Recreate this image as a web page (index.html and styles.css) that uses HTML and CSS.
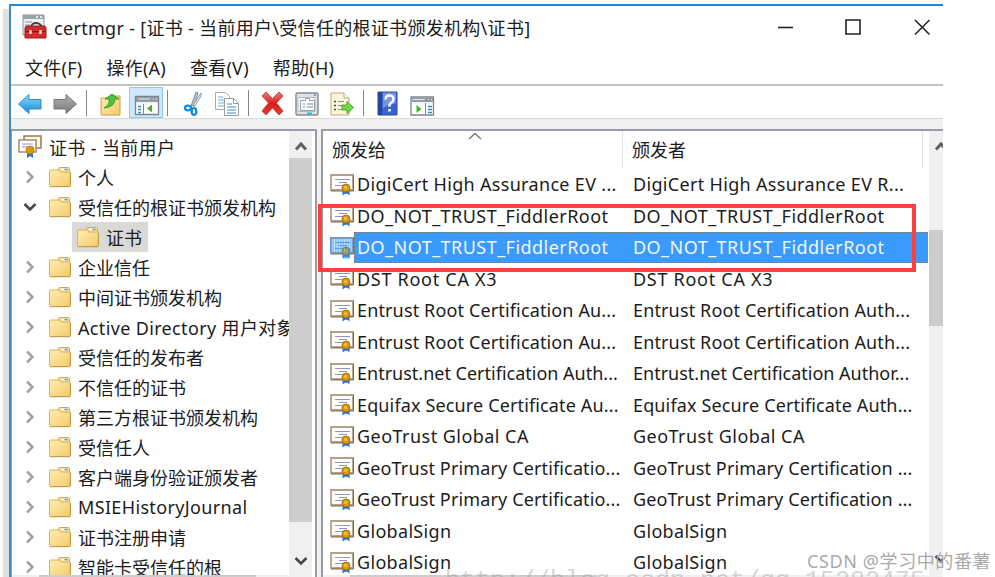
FILE: index.html
```
<!DOCTYPE html>
<html lang="zh-CN">
  <head>
    <meta charset="UTF-8" />
    <meta name="viewport" content="width=device-width, initial-scale=1" />
    <title>certmgr</title>
    <link rel="stylesheet" href="styles.css">
  </head>
  <body>
    <!-- Shared icons -->
    <svg class="defs" width="0" height="0">
      <defs>
        <linearGradient id="gold" x1="0" y1="0" x2="1" y2="1">
          <stop offset="0" stop-color="#ffeeb0" />
          <stop offset="1" stop-color="#f3cb6a" />
        </linearGradient>
        <linearGradient id="blue" x1="0" y1="0" x2="0" y2="1">
          <stop offset="0" stop-color="#8ddcfb" />
          <stop offset="1" stop-color="#1187dc" />
        </linearGradient>
        <linearGradient id="grey" x1="0" y1="0" x2="0" y2="1">
          <stop offset="0" stop-color="#b4b4b4" />
          <stop offset="1" stop-color="#777" />
        </linearGradient>
        <linearGradient id="red" x1="0" y1="0" x2="0" y2="1">
          <stop offset="0" stop-color="#f08078" />
          <stop offset=".5" stop-color="#dc1a15" />
          <stop offset="1" stop-color="#e83a30" />
        </linearGradient>
        <pattern id="dither" width="4" height="4" patternUnits="userSpaceOnUse">
          <path d="M0 0h2v2h2v2h-2v-2h-2z" fill="#3397fa" />
        </pattern>
        <symbol id="folder" viewBox="0 0 22 21">
          <path d="M9.500 3.500v-2q0-1 1-1h9q1 0 1 1v5h-11z" fill="#f6dc91" stroke="#d0aa5c" />
          <path d="M12 2.500h6" stroke="#fffbe8" stroke-width="2" />
          <path d="M15.500 2.500h3" stroke="#4a9ad8" stroke-width="1.500" />
          <path d="M.5 4q0-1 1-1h9l1.500 2h8.500q1 0 1 1v12.500q0 1-1 1h-19q-1 0-1-1z" fill="url(#gold)" stroke="#d8b265" />
          <path d="M1 19.700h20M21.300 6v13" stroke="#bf9748" fill="none" />
        </symbol>
        <symbol id="cert" viewBox="0 0 24 22">
          <path d="M1 1h22v15h-22z" fill="#fff" stroke="#b3a087" stroke-width="1.800" />
          <path d="M1 17h22.500v-16" fill="none" stroke="#80694d" stroke-width="1" />
          <path d="M5 5.500h15M9 8.500h8M5 11.500h8" stroke="#9295c4" stroke-width="1.200" />
          <path d="M12.500 15h7v6.500l-2-1.800h-2.500l-2.500 1.800z" fill="#2870de" />
          <circle cx="16" cy="14" r="4" fill="#d79a12" stroke="#a97505" />
          <circle cx="15.500" cy="13.500" r="1.500" fill="#f3c54c" />
        </symbol>
        <symbol id="cert-selected" viewBox="0 0 24 22">
          <use href="#cert" width="24" height="22" />
          <path d="M0 0h24v17h-4l-1 5h-6v-5h-13z" fill="#3397fa" opacity=".3" />
          <path d="M0 1h24M0 3h24M0 5h24M0 7h24M0 9h24M0 11h24M0 13h24M0 15h24" stroke="#3397fa" stroke-width="1.200" stroke-dasharray="1.500 1" opacity=".8" />
          <path d="M13 18h7M13 20h7" stroke="#3397fa" stroke-width="1" />
        </symbol>
        <symbol id="right" viewBox="0 0 10 14">
          <path d="M2 1.500l5.500 5.500l-5.500 5.500" fill="none" stroke="#a3a3a3" stroke-width="2.500" />
        </symbol>
        <symbol id="down" viewBox="0 0 14 10">
          <path d="M1.500 2l5.500 5.500l5.500-5.500" fill="none" stroke="#454545" stroke-width="2.500" />
        </symbol>
        <symbol id="up" viewBox="0 0 14 10">
          <path d="M2 8.500l5-5.500l5 5.500" fill="none" stroke="#606060" stroke-width="3" />
        </symbol>
        <symbol id="arrow" viewBox="0 0 26 22">
          <path d="M1.500 11l10.500-9.500v5h12v9.500h-12v4.500z" stroke-linejoin="round" />
        </symbol>
      </defs>
    </svg>

    <div class="window">
      <!-- Title bar -->
      <header class="titlebar">
        <svg class="app-icon" width="26" height="26" viewBox="0 0 26 26">
          <path d="M1 1h21v20h-21z" fill="#eef0f2" stroke="#8c949c" />
          <path d="M1 1h21v4h-21z" fill="#9aa3ab" />
          <path d="M14 3h2M18 3h2" stroke="#fff" stroke-width="1.500" />
          <path d="M3 8h7M3 11h5" stroke="#a8b0b8" stroke-width="1.500" />
          <path d="M9 13q1-4 5-4t6 4" fill="none" stroke="#4c4444" stroke-width="2" />
          <path d="M3 14q0-2 2-2h17q2 0 2 2v10h-21z" fill="#cf2c2a" stroke="#a41f1d" />
          <path d="M3 17.500h21" stroke="#8e1716" />
          <path d="M8.500 16v4M18.500 16v4" stroke="#ddd" stroke-width="2.500" />
        </svg>
        <h1 class="title">certmgr - [证书 - 当前用户\受信任的根证书颁发机构\证书]</h1>
        <svg class="controls" width="154" height="18" viewBox="0 0 154 18" fill="none" stroke="#222" stroke-width="1.600">
          <path d="M1 9.500h15" />
          <path d="M69 2h14v14h-14z" />
          <path d="M138 2l14.500 14.500M152.500 2l-14.500 14.500" stroke-width="1.500" />
        </svg>
      </header>

      <nav class="menu">
        <span>文件(F)</span>
        <span>操作(A)</span>
        <span>查看(V)</span>
        <span>帮助(H)</span>
      </nav>

      <!-- Toolbar -->
      <div class="toolbar">
        <svg width="399" height="32" viewBox="0 0 399 32">
          <!-- back / forward -->
          <use href="#arrow" x="6" y="7" width="26" height="22" fill="url(#blue)" stroke="#3a8cc4" />
          <use href="#arrow" width="26" height="22" transform="translate(67 7) scale(-1 1)" fill="url(#grey)" stroke="#777" />
          <path d="M75.500 4v26M156.500 4v26M237.500 4v26M352.500 4v26" stroke="#858585" />
          <!-- up one level -->
          <path d="M90 12h8l2-2h9v19h-19z" fill="url(#gold)" stroke="#c99f50" />
          <path d="M93 22q6-3 5-9h-4l7-5l7 5h-4q0 8-11 9z" fill="#4cc23b" stroke="#2b8f25" stroke-width=".8" />
          <!-- console tree toggle -->
          <path d="M118.500 1.500h33v30h-33z" fill="#cfe8fd" stroke="#8fc8f6" />
          <path d="M124.500 10.500h23v18h-23z" fill="#fff" stroke="#78838c" stroke-width="1.300" />
          <path d="M125 11h22v5h-22z" fill="#929da7" />
          <path d="M127 13h12M142 13h1M145 13h1M125 17h22" stroke="#e4e9ed" />
          <path d="M132.500 18v10" stroke="#7d8991" />
          <path d="M127 20.500h3M127 23.500h3M127 26.500h3" stroke="#3b85c5" stroke-width="1.500" />
          <path d="M141 18.500v8l-5-4z" fill="#43b52d" />
          <!-- cut -->
          <path d="M180 20l5-14l2 1l-4 13z" fill="#b9c7d5" stroke="#697887" stroke-width=".8" />
          <path d="M184 20l6-10v-3l-8 12z" fill="#e5edf4" stroke="#718394" stroke-width=".8" />
          <ellipse cx="177" cy="22" rx="3" ry="2.300" fill="none" stroke="#168edc" stroke-width="2.300" />
          <ellipse cx="183" cy="25.500" rx="2.300" ry="3.300" fill="none" stroke="#168edc" stroke-width="2.300" />
          <!-- copy -->
          <path d="M204.500 6.500h10l4 4v13h-14z" fill="#fff" stroke="#a4a9af" />
          <path d="M207 11h5M207 14h8M207 17h8M207 20h6" stroke="#76a7dc" />
          <path d="M213.500 12.500h9l5 5v12h-14z" fill="#fff" stroke="#969ca3" />
          <path d="M222.500 12.500v5h5" fill="none" stroke="#969ca3" />
          <path d="M216 18h5M216 21h9M216 24h9M216 27h9" stroke="#3f89d5" />
          <!-- delete -->
          <path d="M251 10l4-4l6.500 6.500l6.500-6.500l4 4l-6.500 7l6.500 8l-4 4l-6.500-7l-6.500 7l-4-4l6.500-8z" fill="url(#red)" stroke="#b8524d" stroke-linejoin="round" />
          <!-- properties -->
          <rect x="285" y="7" width="22" height="22" rx="1.500" fill="#dfe3e7" stroke="#85898e" stroke-width="1.400" />
          <path d="M287 11.500h17v14h-17z" fill="#f9fafb" stroke="#b5b9bd" />
          <path d="M289.500 14.500h5v-2h4v2h5v10h-14z" fill="#fff" stroke="#92a0ad" />
          <path d="M292 18h2M296 18h6M292 21h2M296 21h6" stroke="#6f8ba4" />
          <path d="M296 27.500h5" stroke="#25b8e9" stroke-width="2" />
          <path d="M303 9h2" stroke="#4b5560" />
          <!-- export list -->
          <path d="M320 7h13l5 5v17h-18z" fill="#fcf6d7" stroke="#b9aa82" />
          <path d="M333 7v5h5" fill="#fff" stroke="#b9aa82" />
          <path d="M323 15.500h2M323 19.500h2M323 23.500h2" stroke="#444" stroke-width="1.500" />
          <path d="M327 15.500h6M327 19.500h4M327 23.500h5" stroke="#8888a8" stroke-width="1.200" />
          <path d="M331 19h5v-3.500l6.500 6l-6.500 6v-3.500h-5z" fill="#76d64b" stroke="#4aa831" />
          <!-- help -->
          <path d="M367 6h19v23h-19z" fill="#3b62cc" stroke="#2a469b" />
          <path d="M367 6h4v23h-4z" fill="#27459f" />
          <path d="M372 6.500h13v11q-7 0-13 5z" fill="#7694e3" />
          <path d="M374.500 13.500q0-4 4-4t4 3.500q0 2.200-2.200 3.700t-1.800 4" fill="none" stroke="#fff" stroke-width="2.300" />
          <path d="M377.200 23h2.600v2.500h-2.600z" fill="#fff" />
        </svg>
        <!-- action pane toggle -->
        <svg width="25" height="32" viewBox="0 0 25 32">
          <path d="M1 11h22.500v18h-22.500z" fill="#fff" stroke="#7d858c" stroke-width="1.300" />
          <path d="M1.500 11.500h21.500v4.500h-21.500z" fill="#929ba4" />
          <path d="M3 13.500h12M18 13.500h1M21 13.500h1M2 17h21" stroke="#e4e9ed" />
          <path d="M15.500 17v11" stroke="#7d8991" />
          <path d="M18 20.500h4M18 23.500h4M18 26.500h4" stroke="#3b85c5" stroke-width="1.500" />
          <path d="M6.500 19v8l5-4z" fill="#43b52d" />
        </svg>
      </div>

      <main class="panes">
        <!-- Console tree -->
        <section class="tree-pane">
          <div class="tree-column">
            <ul class="tree">
              <li class="root">
                <svg width="24" height="24" viewBox="0 0 24 24">
                  <path d="M6 1h17v12h-17z" fill="#fff7dc" stroke="#92795a" stroke-width="1.500" />
                  <path d="M1 5h17v12h-17z" fill="#fff" stroke="#a58c68" stroke-width="1.500" />
                  <path d="M4 9h11M4 12h5" stroke="#8b97d2" />
                  <path d="M9 16h6v7l-3-2l-3 2z" fill="#2870de" />
                  <circle cx="12" cy="15" r="4" fill="#d79a12" stroke="#b98209" />
                </svg>
                <span>证书 - 当前用户</span>
              </li>
              <li><svg class="chevron"><use href="#right" /></svg><svg class="folder"><use href="#folder" /></svg><span>个人</span></li>
              <li><svg class="chevron open"><use href="#down" /></svg><svg class="folder"><use href="#folder" /></svg><span>受信任的根证书颁发机构</span></li>
              <li class="child"><div class="current"><svg class="folder"><use href="#folder" /></svg><span>证书</span></div></li>
              <li><svg class="chevron"><use href="#right" /></svg><svg class="folder"><use href="#folder" /></svg><span>企业信任</span></li>
              <li><svg class="chevron"><use href="#right" /></svg><svg class="folder"><use href="#folder" /></svg><span>中间证书颁发机构</span></li>
              <li><svg class="chevron"><use href="#right" /></svg><svg class="folder"><use href="#folder" /></svg><span class="latin">Active Directory 用户对象</span></li>
              <li><svg class="chevron"><use href="#right" /></svg><svg class="folder"><use href="#folder" /></svg><span>受信任的发布者</span></li>
              <li><svg class="chevron"><use href="#right" /></svg><svg class="folder"><use href="#folder" /></svg><span>不信任的证书</span></li>
              <li><svg class="chevron"><use href="#right" /></svg><svg class="folder"><use href="#folder" /></svg><span>第三方根证书颁发机构</span></li>
              <li><svg class="chevron"><use href="#right" /></svg><svg class="folder"><use href="#folder" /></svg><span>受信任人</span></li>
              <li><svg class="chevron"><use href="#right" /></svg><svg class="folder"><use href="#folder" /></svg><span>客户端身份验证颁发者</span></li>
              <li><svg class="chevron"><use href="#right" /></svg><svg class="folder"><use href="#folder" /></svg><span class="latin">MSIEHistoryJournal</span></li>
              <li><svg class="chevron"><use href="#right" /></svg><svg class="folder"><use href="#folder" /></svg><span>证书注册申请</span></li>
              <li><svg class="chevron"><use href="#right" /></svg><svg class="folder"><use href="#folder" /></svg><span>智能卡受信任的根</span></li>
            </ul>
            <div class="hscroll"><div class="hthumb tree-hthumb"></div></div>
          </div>
          <div class="scrollbar tree-scroll">
            <svg width="14" height="10"><use href="#up" /></svg>
            <div class="thumb"></div>
            <svg width="14" height="10"><use href="#down" /></svg>
          </div>
        </section>

        <!-- Certificate list -->
        <section class="list-pane">
          <div class="list-column">
            <div class="list">
              <div class="list-head">
                <div>颁发给<svg class="sort" width="14" height="8" viewBox="0 0 14 8"><path d="M1 7l6-5.500l6 5.500" fill="none" stroke="#777" stroke-width="1.500" /></svg></div>
                <div>颁发者</div>
              </div>
              <div class="row loose"><svg class="cert"><use href="#cert" /></svg><span>DigiCert High Assurance EV ...</span><span>DigiCert High Assurance EV R...</span></div>
              <div class="row looser"><svg class="cert"><use href="#cert" /></svg><span>DO_NOT_TRUST_FiddlerRoot</span><span>DO_NOT_TRUST_FiddlerRoot</span></div>
              <div class="row looser selected"><svg class="cert"><use href="#cert-selected" /></svg><span>DO_NOT_TRUST_FiddlerRoot</span><span>DO_NOT_TRUST_FiddlerRoot</span></div>
              <div class="row loosest"><svg class="cert"><use href="#cert" /></svg><span>DST Root CA X3</span><span>DST Root CA X3</span></div>
              <div class="row"><svg class="cert"><use href="#cert" /></svg><span>Entrust Root Certification Au...</span><span>Entrust Root Certification Auth...</span></div>
              <div class="row"><svg class="cert"><use href="#cert" /></svg><span>Entrust Root Certification Au...</span><span>Entrust Root Certification Auth...</span></div>
              <div class="row tight"><svg class="cert"><use href="#cert" /></svg><span>Entrust.net Certification Auth...</span><span>Entrust.net Certification Author...</span></div>
              <div class="row"><svg class="cert"><use href="#cert" /></svg><span>Equifax Secure Certificate Au...</span><span>Equifax Secure Certificate Auth...</span></div>
              <div class="row looser"><svg class="cert"><use href="#cert" /></svg><span>GeoTrust Global CA</span><span>GeoTrust Global CA</span></div>
              <div class="row"><svg class="cert"><use href="#cert" /></svg><span>GeoTrust Primary Certificatio...</span><span>GeoTrust Primary Certification ...</span></div>
              <div class="row"><svg class="cert"><use href="#cert" /></svg><span>GeoTrust Primary Certificatio...</span><span>GeoTrust Primary Certification ...</span></div>
              <div class="row loose"><svg class="cert"><use href="#cert" /></svg><span>GlobalSign</span><span>GlobalSign</span></div>
              <div class="row loose"><svg class="cert"><use href="#cert" /></svg><span>GlobalSign</span><span>GlobalSign</span></div>
            </div>
            <div class="hscroll"><div class="hthumb list-hthumb"></div></div>
          </div>
          <div class="scrollbar list-scroll">
            <svg width="14" height="10"><use href="#up" /></svg>
            <div class="thumb"></div>
            <svg width="14" height="10"><use href="#down" /></svg>
          </div>
        </section>
      </main>
    </div>

    <div class="highlight"></div>
    <div class="url-mark">http://blog.csdn.net/qq_15282475</div>
    <div class="watermark">CSDN @学习中的番薯</div>
  </body>
</html>
```
FILE: styles.css
```
* {
  margin: 0;
  padding: 0;
  box-sizing: border-box;
}

body {
  position: relative;
  width: 995px;
  height: 577px;
  padding: 4px 0 0 9px;
  overflow: hidden;
  background: #fff;
  font-family: "Noto Sans", "Noto Sans CJK SC", sans-serif;
  font-size: 18px;
  color: #1c1c1c;
}

svg {
  display: block;
  flex: none;
}

.defs {
  position: absolute;
}

/* Window frame */
.window {
  display: flex;
  flex-direction: column;
  width: 934px;
  height: 573px;
  border-top: 2px solid #2386d8;
  border-left: 2px solid #3c8cca;
  overflow: hidden;
  box-shadow: -6px 5px 0 #e0e0dc;
}

.titlebar {
  display: flex;
  align-items: center;
  height: 43px;
  padding: 0 12px 2px 11px;
}

.title {
  margin-left: 6px;
  font-size: 18px;
  font-weight: normal;
  letter-spacing: 0.3px;
  white-space: nowrap;
}

.controls {
  margin-left: auto;
}

.menu {
  display: flex;
  align-items: center;
  gap: 24px;
  height: 37px;
  padding-left: 14px;
  border-bottom: 2px solid #c2c2c2;
  letter-spacing: 0.25px;
}

.toolbar {
  display: flex;
  height: 33px;
  border-bottom: 1px solid #d8d8d8;
}

/* Panes */
.panes {
  display: flex;
  flex: 1;
  gap: 4px;
  min-height: 0;
  padding-top: 10px;
  background: #f0f0f0;
}

.tree-pane,
.list-pane {
  display: flex;
  border: 2px solid #989da5;
  border-bottom: 0;
  background: #fff;
  overflow: hidden;
}

.tree-pane {
  width: 306px;
  border-left-width: 1px;
}

.tree-column,
.list-column {
  display: flex;
  flex-direction: column;
}

.tree {
  flex: 1;
  width: 277px;
  min-height: 0;
  padding-top: 1px;
  list-style: none;
  overflow: hidden;
}

.tree li {
  display: flex;
  align-items: center;
  height: 30px;
  padding-left: 11px;
  white-space: nowrap;
}

.tree .root {
  padding-left: 6px;
  gap: 7px;
  letter-spacing: 0.35px;
}

.tree .latin {
  letter-spacing: 0.35px;
}

.chevron {
  width: 10px;
  height: 14px;
  margin: 0 14px 0 2px;
}

.chevron.open {
  width: 14px;
  height: 10px;
  margin: 0 12px 0 0;
}

.folder {
  width: 22px;
  height: 21px;
  margin-right: 7px;
}

.tree .child {
  padding-left: 60px;
}

.current {
  display: flex;
  align-items: center;
  width: 76px;
  height: 30px;
  padding-left: 5px;
  background: #d9d9d6;
}

/* Scrollbars */
.hscroll {
  height: 2px;
  background: #f0f0f0;
}

.hthumb {
  height: 2px;
  background: #cdcdcd;
}

.tree-hthumb {
  width: 217px;
  margin-left: 27px;
}

.list-hthumb {
  width: 247px;
  margin-left: 27px;
}

.scrollbar {
  display: flex;
  flex: none;
  flex-direction: column;
  align-items: center;
  width: 23px;
  background: #f0f0f0;
}

.scrollbar svg {
  margin: 10px 0 7px;
}

.thumb {
  flex: none;
  width: 23px;
  background: #cdcdcd;
}

.tree-scroll .thumb {
  height: 364px;
  margin-bottom: 24px;
}

.list-scroll .thumb {
  height: 96px;
  margin: 72px 0 218px;
}

/* Certificate list */
.list-pane {
  flex: 1;
  border-right: 0;
}

.list {
  flex: 1;
  width: 606px;
  min-height: 0;
  overflow: hidden;
}

.list-head {
  display: flex;
  height: 38px;
  line-height: 38px;
}

.list-head div {
  position: relative;
  width: 300px;
  height: 37px;
  padding-left: 9px;
  border-right: 1px solid #e2e2e2;
}

.sort {
  position: absolute;
  top: 1px;
  left: 145px;
}

.row {
  display: flex;
  align-items: center;
  height: 31.5px;
  padding-left: 7px;
  letter-spacing: 0.14px;
  white-space: nowrap;
}

.row.tight {
  letter-spacing: 0;
}

.row.loose {
  letter-spacing: 0.32px;
}

.row.looser {
  letter-spacing: 0.46px;
}

.row.loosest {
  letter-spacing: 0.72px;
}

.cert {
  width: 24px;
  height: 22px;
}

.row span {
  height: 31px;
  line-height: 31px;
  padding-left: 3px;
}

.row span:nth-of-type(1) {
  width: 276px;
}

.row span:nth-of-type(2) {
  width: 298px;
}

.row.selected span {
  background: #3a9bfc;
  border: 1px dashed #947b58;
  border-width: 1px 0;
  line-height: 29px;
  color: #f0f6ff;
}

.row.selected span:nth-of-type(1) {
  padding-left: 2px;
  border-left-width: 1px;
}

/* Overlays */
.highlight {
  position: absolute;
  top: 204px;
  left: 318px;
  width: 598px;
  height: 68px;
  border: 4px solid #fb403f;
}

.url-mark {
  position: absolute;
  top: 567px;
  left: 445px;
  font: 25px "Liberation Mono", monospace;
  white-space: nowrap;
  color: rgba(150, 150, 145, 0.4);
}

.watermark {
  position: absolute;
  top: 547px;
  left: 807px;
  font-size: 18px;
  letter-spacing: 0.6px;
  white-space: nowrap;
  color: #a9a9a9;
}
```
